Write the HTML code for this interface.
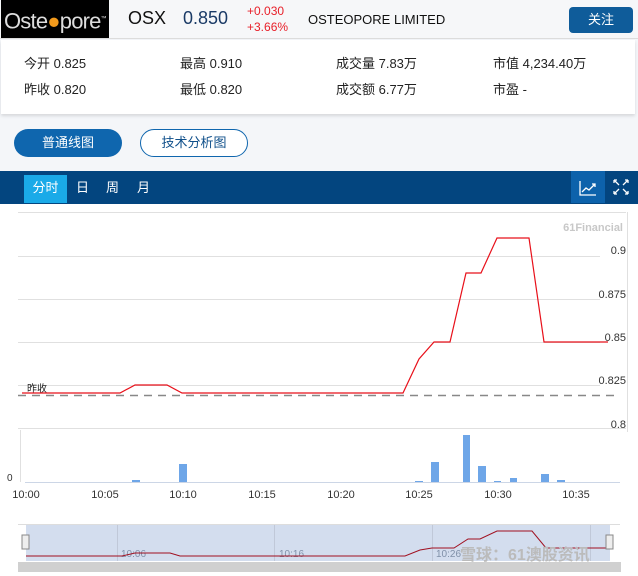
<!DOCTYPE html>
<html><head><meta charset="utf-8"><style>
*{margin:0;padding:0;box-sizing:border-box}
body{width:638px;height:576px;overflow:hidden;background:#f4f6f9;font-family:"Liberation Sans","Noto Sans CJK SC",sans-serif;position:relative;color:#222}
.abs{position:absolute}
</style></head><body>
<div class="abs" style="left:0;top:0;width:638px;height:39px;background:#f6f7f9;border-bottom:1px solid #dcdcdc"></div>
<div class="abs" style="left:1px;top:0;width:108px;height:38px;background:#000;color:#ddd;font-size:22px;line-height:38px;padding-left:3px;letter-spacing:-0.8px">Oste<span style="color:#f29a1c">●</span>pore<sup style="font-size:6px">™</sup></div>
<div class="abs" style="left:128px;top:8px;font-size:18px;color:#111">OSX</div>
<div class="abs" style="left:183px;top:8px;font-size:18px;color:#1a3a66">0.850</div>
<div class="abs" style="left:247px;top:3px;font-size:12px;color:#e8202a;line-height:16px">+0.030<br>+3.66%</div>
<div class="abs" style="left:308px;top:12px;font-size:13px;color:#111">OSTEOPORE LIMITED</div>
<div class="abs" style="left:569px;top:7px;width:64px;height:26px;background:#0f5c9a;border-radius:4px;color:#fff;font-size:13px;text-align:center;line-height:26px">关注</div>
<div class="abs" style="left:1px;top:40px;width:634px;height:74px;background:#fff;box-shadow:0 2px 3px rgba(0,0,0,.12)"></div>
<div class="abs" style="top:51px;left:24px;font-size:13px;line-height:26px">今开 0.825<br>昨收 0.820</div>
<div class="abs" style="top:51px;left:180px;font-size:13px;line-height:26px">最高 0.910<br>最低 0.820</div>
<div class="abs" style="top:51px;left:336px;font-size:13px;line-height:26px">成交量 7.83万<br>成交额 6.77万</div>
<div class="abs" style="top:51px;left:493px;font-size:13px;line-height:26px">市值 4,234.40万<br>市盈 -</div>
<div class="abs" style="left:14px;top:129px;width:108px;height:28px;background:#0f66ae;border-radius:14px;color:#fff;font-size:13px;text-align:center;line-height:28px">普通线图</div>
<div class="abs" style="left:140px;top:129px;width:108px;height:28px;border:1px solid #0f66ae;background:#fff;border-radius:14px;color:#0f4f8a;font-size:13px;text-align:center;line-height:26px">技术分析图</div>
<div class="abs" style="left:0;top:171px;width:638px;height:33px;background:#03457f"></div>
<div class="abs" style="left:24px;top:175px;width:43px;height:28px;background:#1aaae8;color:#fff;font-size:13px;text-align:center;line-height:26px">分时</div>
<div class="abs" style="left:76px;top:175px;color:#fff;font-size:13px;line-height:26px">日</div>
<div class="abs" style="left:106px;top:175px;color:#fff;font-size:13px;line-height:26px">周</div>
<div class="abs" style="left:137px;top:175px;color:#fff;font-size:13px;line-height:26px">月</div>
<div class="abs" style="left:571px;top:171px;width:34px;height:32px;background:#0d62ab"></div>
<svg class="abs" style="left:0;top:0" width="638" height="576">
<g stroke="#fff" fill="none" stroke-width="1.3"><path d="M580 181V195H596M582 192L586 188L589 190L595 184M592 184H595V187"/>
<path d="M614 180L619 185M614 180V183M614 180H617M628 180L623 185M628 180V183M628 180H625M614 194L619 189M614 194V191M614 194H617M628 194L623 189M628 194V191M628 194H625"/></g>
<rect x="0" y="204" width="638" height="372" fill="#fff"/>
<g stroke="#e0e0e0"><path d="M18 212.5H626M18 256.5H600M18 299.5H600M18 342.5H600M18 385.5H600M18 428.5H626M627.5 212V432M20.5 430V482"/></g>
<text x="623" y="231" font-size="11" fill="#c8c8c8" text-anchor="end" font-weight="bold">61Financial</text>
<g font-size="11" fill="#333" text-anchor="end"><text x="626" y="254">0.9</text><text x="626" y="298">0.875</text><text x="626" y="341">0.85</text><text x="626" y="384">0.825</text><text x="626" y="428">0.8</text></g>
<text x="27" y="392" font-size="10" fill="#222">昨收</text>
<path d="M18 395.5H620" stroke="#888" stroke-width="1.5" stroke-dasharray="8,6"/>
<polyline fill="none" stroke="#e8101a" stroke-width="1.2" points="22,393 120,393 135,385 167,385 182,393 403,393 419,359 434,342 450,342 466,273 481,273 497,238 529,238 544,342 608,342"/>
<g fill="#6ea6e8"><rect x="132" y="480" width="8" height="2"/><rect x="179" y="464" width="8" height="18"/><rect x="415" y="481" width="8" height="1"/><rect x="431" y="462" width="8" height="20"/><rect x="463" y="435" width="7" height="47"/><rect x="478" y="466" width="8" height="16"/><rect x="494" y="481" width="7" height="1"/><rect x="510" y="478" width="7" height="4"/><rect x="541" y="474" width="8" height="8"/><rect x="557" y="480" width="8" height="2"/></g>
<path d="M25 482.5H620" stroke="#ccd6e6"/>
<text x="7" y="481" font-size="10" fill="#333">0</text>
<g font-size="11" fill="#333" text-anchor="middle"><text x="26" y="498">10:00</text><text x="105" y="498">10:05</text><text x="183" y="498">10:10</text><text x="262" y="498">10:15</text><text x="341" y="498">10:20</text><text x="419" y="498">10:25</text><text x="498" y="498">10:30</text><text x="576" y="498">10:35</text></g>
<path d="M18 524.5H620" stroke="#ddd"/>
<rect x="26" y="525" width="584" height="36" fill="#d3ddee"/>
<g stroke="#c0c8d8"><path d="M117.5 525V561M274.5 525V561M432.5 525V561M590.5 525V561"/></g>
<g font-size="10" fill="#8090a8"><text x="121" y="557">10:06</text><text x="279" y="557">10:16</text><text x="436" y="557">10:26</text></g>
<polyline fill="none" stroke="#a01020" stroke-width="1" points="26,556 122,556 135,553 170,553 180,556 405,556 420,550 432,548 454,548 468,539 480,539 497,531 532,531 546,548 608,548"/>
<rect x="22" y="535" width="7" height="14" fill="#eee" stroke="#888"/>
<rect x="606" y="535" width="7" height="14" fill="#eee" stroke="#888"/>
<rect x="18" y="562" width="603" height="10" fill="#d0d0d0"/>
<text x="460" y="560" font-size="16" fill="#bbb" font-weight="bold">雪球：61澳股资讯</text>
</svg>
</body></html>
